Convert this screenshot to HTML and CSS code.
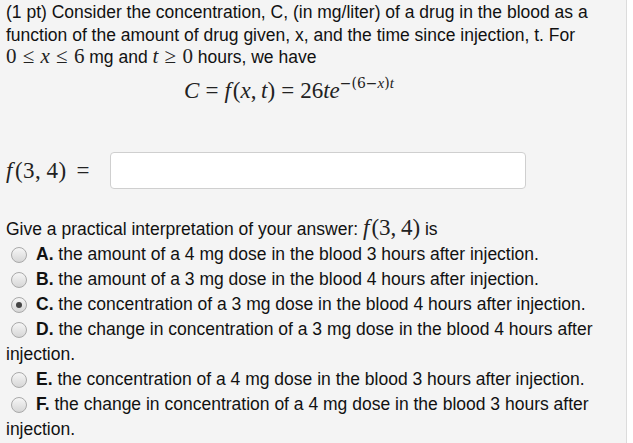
FILE: index.html
```html
<!DOCTYPE html>
<html>
<head>
<meta charset="utf-8">
<link rel="stylesheet" href="styles.css">
</head>
<body>
<div class="panel">
  <p class="intro">(1 pt) Consider the concentration, C, (in mg/liter) of a drug in the blood as a function of the amount of drug given, x, and the time since injection, t. For <span class="m nw">0 <span class="op">&le;</span> <i>x</i> <span class="op">&le;</span> 6</span> mg and <span class="m nw"><i>t</i> <span class="op">&ge;</span> 0</span> hours, we have</p>
  <div class="display"><span class="m eq"><i>C</i><span class="rel">=</span><i class="f">f</i>(<i>x</i>,&thinsp;<i>t</i>)<span class="rel">=</span>26<i>te</i><sup>&minus;(6&minus;<i>x</i>)<i>t</i></sup></span></div>
  <div class="answer-row">
    <span class="m lhs"><i class="f">f</i>(3,&thinsp;4)<span class="rel">=</span></span>
    <span class="answer-box"></span>
  </div>
  <p class="prompt">Give a practical interpretation of your answer: <span class="m big"><i class="f">f</i>(3,&thinsp;4)</span> is</p>
  <div class="options">
    <div class="opt"><span class="radio"></span><b>A.</b> the amount of a 4 mg dose in the blood 3 hours after injection.</div>
    <div class="opt"><span class="radio"></span><b>B.</b> the amount of a 3 mg dose in the blood 4 hours after injection.</div>
    <div class="opt"><span class="radio checked"></span><b>C.</b> the concentration of a 3 mg dose in the blood 4 hours after injection.</div>
    <div class="opt"><span class="radio"></span><b>D.</b> <span>the change in concentration of a 3 mg dose in the blood 4 hours after</span><br><span>injection.</span></div>
    <div class="opt"><span class="radio"></span><b>E.</b> the concentration of a 4 mg dose in the blood 3 hours after injection.</div>
    <div class="opt"><span class="radio"></span><b>F.</b> <span>the change in concentration of a 4 mg dose in the blood 3 hours after</span><br><span>injection.</span></div>
  </div>
</div>
</body>
</html>
```
FILE: styles.css
```css
html, body {
  margin: 0;
  padding: 0;
  background: #ffffff;
}
.panel {
  width: 620px;
  height: 443px;
  overflow: hidden;
  box-sizing: content-box;
  padding: 0 0 0 6px;
  background: #f4f4f4;
  border-right: 1px solid #dcdcdc;
  font-family: "Liberation Sans", Arial, sans-serif;
  font-size: 17.5px;
  color: #111;
}
.intro {
  margin: 0;
  padding-top: 1px;
  line-height: 22.5px;
  width: 600px;
}
.m {
  font-family: "Liberation Serif", "Times New Roman", serif;
  font-size: 21px;
  line-height: 1;
  color: #222;
}
.nw { white-space: nowrap; }
.m i { font-style: italic; }
.m i.f { margin-right: 2px; }
.op { margin: 0 1px; }
.rel { margin: 0 6px; }
.display {
  text-align: center;
  width: 566px;
  line-height: 32px;
  margin-top: 7px;
}
.eq { font-size: 23px; }
.display sup {
  font-size: 14px;
  font-family: "DejaVu Serif", serif;
  vertical-align: 10px;
  line-height: 1;
}
.display sup i { font-family: "Liberation Serif", serif; font-size: 15px; }
.answer-row {
  display: flex;
  align-items: center;
  margin-top: 44px;
  gap: 6px;
}
.lhs { font-size: 23px; width: 98px; letter-spacing: 0.5px; }
.lhs .rel { margin: 0 0 0 10px; }
.answer-box {
  display: block;
  width: 414px;
  height: 35px;
  background: #fff;
  border: 1px solid #cfcfcf;
  border-radius: 4px;
}
.prompt {
  margin: 27px 0 0 0;
  line-height: 24px;
}
.big { font-size: 23px; }
.options { margin-top: 1px; }
.opt {
  line-height: 25px;
  width: 600px;
}
.radio {
  display: inline-block;
  width: 14px;
  height: 14px;
  border: 1px solid #a9a9a9;
  border-radius: 50%;
  background: linear-gradient(#f6f6f6, #d6d6d6);
  vertical-align: -3px;
  margin: 0 9px 0 5px;
  position: relative;
  box-sizing: content-box;
}
.radio.checked::after {
  content: "";
  position: absolute;
  left: 4px;
  top: 4px;
  width: 6px;
  height: 6px;
  border-radius: 50%;
  background: #444;
}
.opt b { font-weight: bold; }
```
